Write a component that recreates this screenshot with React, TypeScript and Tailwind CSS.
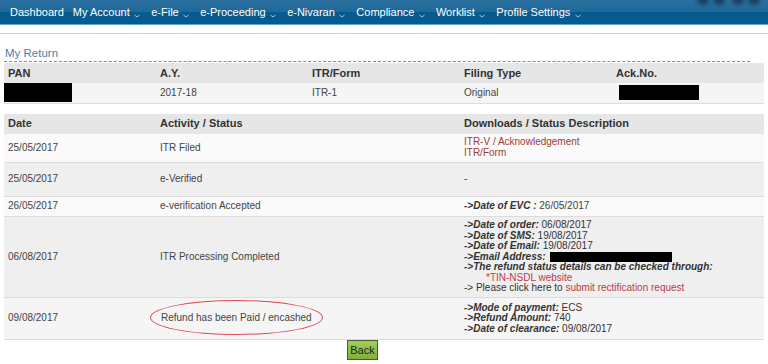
import React from 'react';

const font = { fontFamily: '"Liberation Sans", Arial, sans-serif' };

function Caret() {
  return (
    <svg width="6" height="4" viewBox="0 0 6 4" className="ml-[4.5px] mt-[6px]">
      <path d="M0.5 1 L3 3 L5.5 1" fill="none" stroke="#9cc3e0" strokeWidth="1" />
    </svg>
  );
}

const navItems = [
  { label: 'Dashboard', caret: false },
  { label: 'My Account', caret: true },
  { label: 'e-File', caret: true },
  { label: 'e-Proceeding', caret: true },
  { label: 'e-Nivaran', caret: true },
  { label: 'Compliance', caret: true },
  { label: 'Worklist', caret: true },
  { label: 'Profile Settings', caret: true },
];

function Label({ children }: { children: React.ReactNode }) {
  return <span className="font-bold italic text-[#333]">{children}</span>;
}

export default function App() {
  return (
    <div className="w-[768px] h-[364px] overflow-hidden bg-white text-[10px] text-[#444]" style={font}>
      {/* Top nav */}
      <div className="relative h-[25px] border-b border-[#5ea4d4] bg-[linear-gradient(to_bottom,#2a70a0_0%,#1f6898_48%,#065a8e_52%,#055a8e_100%)]">
        <div className="flex items-center h-full pl-[10px] pt-[1px] gap-[11px] text-white text-[11px]">
          {navItems.map((item) => (
            <div key={item.label} className={`flex items-center ${item.caret ? '' : 'mr-[-2px]'}`}>
              <span>{item.label}</span>
              {item.caret && <Caret />}
            </div>
          ))}
        </div>
        <div className="absolute top-[-7px] left-[697px] flex gap-[4px]">
          <span className="w-[12px] h-[12px] rounded-full bg-[#1b3d5a] blur-[2px]" />
          <span className="w-[12px] h-[12px] rounded-full bg-[#1b3d5a] blur-[2px]" />
          <span className="w-[12px] h-[12px] rounded-full bg-[#1b3d5a] blur-[2px] ml-[3px]" />
          <span className="w-[12px] h-[12px] rounded-full bg-[#1b3d5a] blur-[2px]" />
        </div>
      </div>

      <div className="mt-[8px] border-t border-[#d4d4d4]" />

      <div className="px-[4px]">
        <div className="mt-[12px] pl-[1px] text-[11.5px] leading-[14px] text-[#4f7ea8]">My Return</div>
        <div className="mt-[1px] w-[746px] border-b border-dashed border-[#8a8a8a]" />

        {/* Return summary */}
        <table className="mt-[1px] w-[760px] table-fixed border-collapse">
          <colgroup>
            <col className="w-[152px]" />
            <col className="w-[152px]" />
            <col className="w-[152px]" />
            <col className="w-[152px]" />
            <col className="w-[152px]" />
          </colgroup>
          <thead>
            <tr className="h-[20px] bg-[#e6e6e6] text-left text-[11px] font-bold text-[#333]">
              <th className="px-[4px]">PAN</th>
              <th className="px-[4px]">A.Y.</th>
              <th className="px-[4px]">ITR/Form</th>
              <th className="px-[4px]">Filing Type</th>
              <th className="px-[4px]">Ack.No.</th>
            </tr>
          </thead>
          <tbody>
            <tr className="h-[20px] bg-[#f5f5f5] border-b border-[#dcdcdc]">
              <td className="p-0">
                <div className="w-[68px] h-[19px] bg-black" />
              </td>
              <td className="px-[4px]">2017-18</td>
              <td className="px-[4px]">ITR-1</td>
              <td className="px-[4px]">Original</td>
              <td className="pl-[7px]">
                <div className="w-[80px] h-[15px] bg-black" />
              </td>
            </tr>
          </tbody>
        </table>

        {/* Activity table */}
        <table className="mt-[10px] w-[760px] table-fixed border-collapse">
          <colgroup>
            <col className="w-[152px]" />
            <col className="w-[304px]" />
            <col className="w-[304px]" />
          </colgroup>
          <thead>
            <tr className="h-[20px] bg-[#e6e6e6] text-left text-[11px] font-bold text-[#333]">
              <th className="px-[4px]">Date</th>
              <th className="px-[4px]">Activity / Status</th>
              <th className="px-[4px]">Downloads / Status Description</th>
            </tr>
          </thead>
          <tbody className="leading-[10.5px]">
            <tr className="h-[29px] bg-[#fafafa] border-b border-[#dcdcdc]">
              <td className="px-[4px]">25/05/2017</td>
              <td className="px-[4px]">ITR Filed</td>
              <td className="px-[4px] text-[#9e3a33]">
                <div>ITR-V / Acknowledgement</div>
                <div>ITR/Form</div>
              </td>
            </tr>
            <tr className="h-[34px] bg-[#efefef] border-b border-[#dcdcdc]">
              <td className="px-[4px]">25/05/2017</td>
              <td className="px-[4px]">e-Verified</td>
              <td className="px-[4px]">-</td>
            </tr>
            <tr className="h-[20px] bg-[#fafafa] border-b border-[#dcdcdc]">
              <td className="px-[4px]">26/05/2017</td>
              <td className="px-[4px]">e-verification Accepted</td>
              <td className="px-[4px]">
                <Label>-&gt;Date of EVC :</Label> 26/05/2017
              </td>
            </tr>
            <tr className="h-[81px] bg-[#efefef] border-b border-[#dcdcdc]">
              <td className="px-[4px]">06/08/2017</td>
              <td className="px-[4px]">ITR Processing Completed</td>
              <td className="px-[4px] text-[#333]">
                <div><Label>-&gt;Date of order:</Label> 06/08/2017</div>
                <div><Label>-&gt;Date of SMS:</Label> 19/08/2017</div>
                <div><Label>-&gt;Date of Email:</Label> 19/08/2017</div>
                <div className="flex items-center">
                  <Label>-&gt;Email Address:</Label>
                  <span className="ml-[4px] inline-block w-[122px] h-[10px] bg-black" />
                </div>
                <div><Label>-&gt;The refund status details can be checked through:</Label></div>
                <div className="pl-[22px] text-[#c0394a]">*TIN-NSDL website</div>
                <div>
                  -&gt; Please click here to <span className="text-[#c0394a]">submit rectification request</span>
                </div>
              </td>
            </tr>
            <tr className="h-[42px] bg-[#f5f5f5] border-b border-[#dcdcdc]">
              <td className="px-[4px]">09/08/2017</td>
              <td className="px-[4px]">
                <div className="relative pl-[1px]">
                  Refund has been Paid / encashed
                  <span className="absolute left-[-10px] top-[-13px] w-[173px] h-[35px] rounded-[50%] border border-[#e0485a]" />
                </div>
              </td>
              <td className="px-[4px] text-[#333]">
                <div><Label>-&gt;Mode of payment:</Label> ECS</div>
                <div><Label>-&gt;Refund Amount:</Label> 740</div>
                <div><Label>-&gt;Date of clearance:</Label> 09/08/2017</div>
              </td>
            </tr>
          </tbody>
        </table>

        <div className="pl-[343px]">
          <button className="w-[31px] h-[20px] border border-[#4d5a3a] bg-[linear-gradient(to_bottom,#9fd052,#7fb13a)] text-[11px] text-[#222] leading-none">
            Back
          </button>
        </div>
      </div>
    </div>
  );
}
